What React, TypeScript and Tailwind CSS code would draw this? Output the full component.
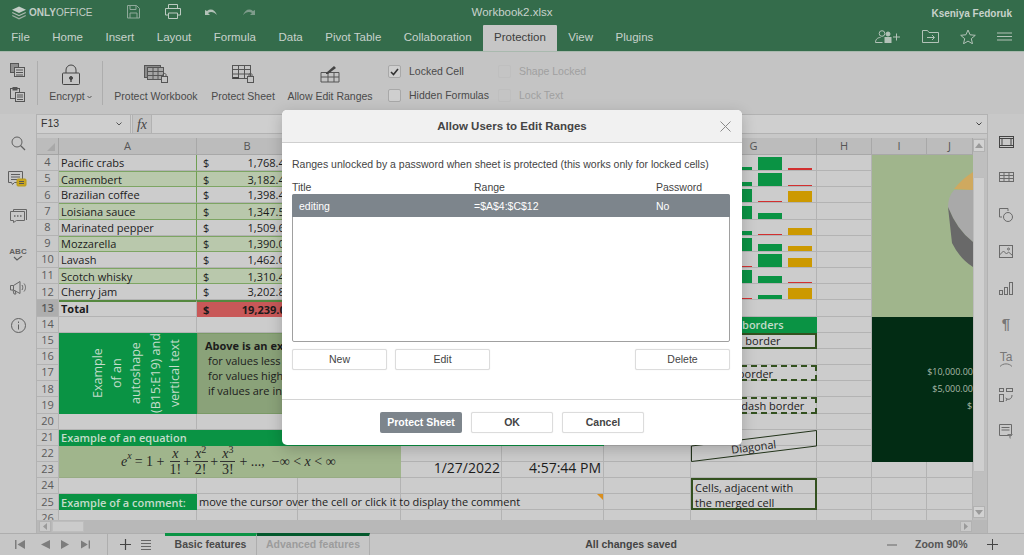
import React from "react";

const UI = "font-['Liberation_Sans',Arial,sans-serif]";
const CELL = "font-['Open_Sans',sans-serif] text-[11px] leading-[15px] text-[#1c1c1c]";

const tabs = ["File", "Home", "Insert", "Layout", "Formula", "Data", "Pivot Table", "Collaboration", "Protection", "View", "Plugins"];
const items: [string, string, boolean][] = [
  ["Pacific crabs", "1,768.41", false],
  ["Camembert", "3,182.40", true],
  ["Brazilian coffee", "1,398.40", false],
  ["Loisiana sauce", "1,347.50", true],
  ["Marinated pepper", "1,509.60", false],
  ["Mozzarella", "1,390.00", true],
  ["Lavash", "1,462.00", false],
  ["Scotch whisky", "1,310.40", true],
  ["Cherry jam", "3,202.80", false],
];
type Bar = [number, "g" | "r" | "a" | "n"];
const bars: Bar[][] = [
  [[3, "g"], [13, "g"], [2, "r"]],
  [[4, "g"], [13, "g"], [1, "r"]],
  [[13, "g"], [1, "r"], [11, "a"]],
  [[13, "g"], [6, "g"], [0, "n"]],
  [[4, "g"], [1, "r"], [7, "a"]],
  [[13, "g"], [7, "g"], [5, "a"]],
  [[1, "r"], [13, "g"], [9, "a"]],
  [[13, "g"], [7, "g"], [1, "r"]],
  [[1, "r"], [4, "g"], [11, "a"]],
];
const barColor = { g: "bg-[#0a9344]", r: "bg-[#d22f2f]", a: "bg-[#cc9900]", n: "bg-transparent" };
const cols = ["A", "B", "C", "D", "E", "F", "G", "H", "I", "J"];
const rowNums = Array.from({ length: 23 }, (_, i) => i + 4);

const Ic = ({ w, h, children, className = "" }: { w: number; h: number; children: React.ReactNode; className?: string }) => (
  <svg width={w} height={h} viewBox={`0 0 ${w} ${h}`} fill="none" stroke="currentColor" strokeWidth="1" className={className}>
    {children}
  </svg>
);

function Fraction({ n, sup, d }: { n: string; sup?: string; d: string }) {
  return (
    <span className="inline-flex flex-col items-center mx-[2px] leading-[15px]">
      <span className="border-b border-[#333] px-[2px] italic h-[16px]">
        {n}
        {sup && <sup className="text-[10px] not-italic leading-none">{sup}</sup>}
      </span>
      <span>{d}</span>
    </span>
  );
}

function Header() {
  return (
    <div className={`bg-[#346c4b] h-[52px] shrink-0 flex flex-col border-b border-[#a9b9ae] ${UI}`}>
      <div className="h-[25px] flex items-center relative text-[#c8d2cb]">
        <div className="flex items-center pl-[11px] w-[120px]">
          <svg width="16" height="14" viewBox="0 0 16 14" className="mr-[2px]">
            <path d="M8 0.5 15 3.8 8 7 1 3.8Z" fill="#c4cec7" />
            <path d="M1.5 6 8 9 14.5 6 15 7 8 10.2 1 7Z" fill="#aebbb2" />
            <path d="M1.5 9 8 12 14.5 9 15 10 8 13.4 1 10Z" fill="#9dada3" />
          </svg>
          <span className="text-[10px] font-bold text-[#c2cdc6]">ONLY<span className="font-normal">OFFICE</span></span>
        </div>
        <div className="flex items-center text-[#8fa99a] absolute left-[127px] top-[4px]">
          <Ic w={13} h={15}><path d="M.5 1.5h9l3 3v9.5h-12zM3 1.5v4h6v-4M3 14v-5h7v5" /></Ic>
          <Ic w={16} h={15} className="text-[#bccac1] ml-[25px]"><path d="M3.5 4V.5h9V4M.5 4.5h15V11h-3M3.5 11h-3V4.5M3.5 9h9v5.5h-9z" /></Ic>
          <Ic w={14} h={10} className="text-[#b3c2b8] ml-[23px]"><path d="M1 3v5h5L4 6c3-2 6-1 9 2-2-5-6-7-10-4z" fill="currentColor" stroke="none" /></Ic>
          <Ic w={14} h={10} className="text-[#7e9c8b] ml-[24px]"><path d="M13 3v5H8l2-2c-3-2-6-1-9 2 2-5 6-7 10-4z" fill="currentColor" stroke="none" /></Ic>
        </div>
        <div className="flex-1 text-center text-[11.5px] text-[#c8d2cb] pr-[120px]">Workbook2.xlsx</div>
        <div className="absolute right-[12px] top-[6px] text-[10px] font-bold text-[#c8d2cb]">Kseniya Fedoruk</div>
      </div>
      <div className="h-[26px] flex items-stretch text-[11.5px] text-[#c8d2cb] relative">
        {tabs.map((t) => (
          <div
            key={t}
            className={`px-[11.25px] flex items-center rounded-t-[1px] ${t === "Protection" ? "bg-[#c6c6c6] text-[#3d3d3d]" : ""}`}
          >
            {t}
          </div>
        ))}
        <div className="ml-auto flex items-center gap-[21px] pr-[12px] text-[#b3c2b8] -mt-[3px]">
          <Ic w={26} h={13}>
            <circle cx="7" cy="3.5" r="2.8" />
            <path d="M.5 12.5c0-4 3-5 5-5M.5 12.5h7" />
            <circle cx="13" cy="4" r="2" fill="currentColor" />
            <rect x="10" y="7.5" width="6" height="5" fill="currentColor" />
            <path d="M18 7h7M21.5 3.5v7" />
          </Ic>
          <Ic w={17} h={13}><path d="M.5 12.5V.5h5l1.5 2h9.5v10zM5 7.5h7M10 5l2.5 2.500L10 10" /></Ic>
          <Ic w={16} h={15}><path d="M8 1l2.100 4.800 5.200.5-4 3.400 1.200 5.100L8 12.100 3.500 14.800l1.200-5.100-4-3.400 5.200-.5z" /></Ic>
          <Ic w={15} h={9}><path d="M0 1h15M0 4.500h15M0 8h15" /></Ic>
        </div>
      </div>
    </div>
  );
}

function Check({ on, off }: { on?: boolean; off?: boolean }) {
  return (
    <span className={`w-[13px] h-[13px] rounded-[2px] border flex items-center justify-center ${off ? "border-[#bfbfbf] bg-[#c4c4c4]" : "border-[#a8a8a8] bg-[#cfcfcf]"}`}>
      {on && (
        <svg width="9" height="8" viewBox="0 0 9 8"><path d="M1 4l2.500 2.500L8 1" stroke="#333" strokeWidth="1.600" fill="none" /></svg>
      )}
    </span>
  );
}

function BigBtn({ w, label, children }: { w: number; label: string; children: React.ReactNode }) {
  return (
    <div className="flex flex-col items-center" style={{ width: w }}>
      <div className="h-[24px] flex items-end justify-center pb-[2px] text-[#555]">{children}</div>
      <div className="mt-[5px] text-[10.5px] leading-[13px] whitespace-nowrap text-[#4a4a4a]">{label}</div>
    </div>
  );
}

function Toolbar() {
  return (
    <div className={`bg-[#c4c4c4] h-[62px] shrink-0 flex items-start pt-[9px] ${UI}`}>
      <div className="w-[37px] flex flex-col items-center gap-[10px] pt-[2px] text-[#555] -ml-[1px]">
        <Ic w={15} h={14}>
          <rect x=".5" y=".5" width="8" height="9" fill="#8e8e8e" />
          <rect x="4.500" y="4.500" width="10" height="9" fill="#c4c4c4" />
          <path d="M6 7h7M6 9.500h7M6 12h7" />
        </Ic>
        <Ic w={15} h={15}>
          <rect x=".5" y="1.500" width="9" height="10" />
          <rect x="3" y="0" width="4" height="3" fill="#555" />
          <rect x="5.500" y="5.500" width="9" height="9" fill="#c4c4c4" />
          <path d="M7 8h6M7 10h6M7 12.500h6" />
        </Ic>
      </div>
      <div className="w-px h-[44px] bg-[#adadad] ml-[1px]" />
      <div className="w-[64px] flex flex-col items-center pl-[1px]">
        <div className="h-[24px] flex items-end text-[#444]">
          <Ic w={18} h={21}>
            <path d="M4 9V6a5 5 0 0 1 10 0v3" />
            <rect x=".5" y="9" width="17" height="11.500" rx="1" />
            <circle cx="9" cy="14" r="1.500" fill="currentColor" />
            <path d="M9 15v3" strokeWidth="1.400" />
          </Ic>
        </div>
        <div className="mt-[5px] text-[10.5px] leading-[13px] text-[#4a4a4a] flex items-center gap-[2px]">
          Encrypt
          <svg width="5" height="4" viewBox="0 0 5 4"><path d="M.5 1l2 2 2-2" stroke="#555" fill="none" /></svg>
        </div>
      </div>
      <div className="w-px h-[44px] bg-[#adadad]" />
      <div className="flex ml-[11px]">
        <BigBtn w={84} label="Protect Workbook">
          <Ic w={24} h={18}>
            <rect x=".5" y=".5" width="16" height="12" fill="#8a8a8a" />
            <rect x="3.500" y="2.500" width="16" height="12" fill="#a5a5a5" />
            <path d="M3.500 6.500h16M3.500 10.500h16M9 2.500v12M14 2.500v12" />
            <rect x="17.500" y="11.500" width="6" height="6" fill="#c4c4c4" />
            <path d="M19 11.500v-2a1.600 1.600 0 0 1 3 0v2" />
          </Ic>
        </BigBtn>
        <div className="w-[13px]" />
        <BigBtn w={64} label="Protect Sheet">
          <Ic w={22} h={18}>
            <rect x=".5" y=".5" width="18" height="13" />
            <path d="M.5 4.500h18M.5 9h18M6.500 .5v13M12.500 .5v13" />
            <rect x="1" y="12" width="6" height="2" fill="#444" stroke="none" />
            <rect x="15.500" y="11.500" width="6" height="6" fill="#c4c4c4" />
            <path d="M17 11.500v-2a1.600 1.600 0 0 1 3 0v2" />
          </Ic>
        </BigBtn>
        <div className="w-[13px]" />
        <BigBtn w={84} label="Allow Edit Ranges">
          <Ic w={20} h={18}>
            <path d="M1 7.500h18v9.500H1zM1 12h18M8 7.500v9.500M14 7.500V17" />
            <path d="M6 8l8-7 2 2-8 6H6z" fill="#444" stroke="none" />
          </Ic>
        </BigBtn>
      </div>
      <div className="ml-[16px] flex flex-col text-[10.5px] leading-[13px] -mt-[1px]">
        <div className="h-[23px] flex items-center gap-[8px] text-[#4a4a4a]"><Check on /> Locked Cell</div>
        <div className="h-[25px] flex items-center gap-[8px] text-[#4a4a4a]"><Check /> Hidden Formulas</div>
      </div>
      <div className="ml-[9px] flex flex-col text-[10.5px] leading-[13px] -mt-[1px]">
        <div className="h-[23px] flex items-center gap-[8px] text-[#a0a0a0]"><Check off /> Shape Locked</div>
        <div className="h-[25px] flex items-center gap-[8px] text-[#a0a0a0]"><Check off /> Lock Text</div>
      </div>
    </div>
  );
}

function LeftRail() {
  return (
    <div className="w-[37px] shrink-0 bg-[#c8c8c8] border-r border-[#b2b2b2] flex flex-col items-center pt-[22px] text-[#666]">
      <div className="h-[36px]">
        <Ic w={15} h={15} className="text-[#606060]"><circle cx="6" cy="6" r="5" /><path d="M9.500 9.500L14 14" strokeWidth="1.300" /></Ic>
      </div>
      <div className="h-[38px] -mt-[1px]">
        <svg width="20" height="16" viewBox="0 0 20 16" fill="none" stroke="#5f5f5f">
          <path d="M.5.5h14v11h-8l-2 2-1-2h-3z" />
          <path d="M3 3.500h9M3 6h9M3 8.500h6" />
          <rect x="9" y="8" width="9" height="7" rx="1" fill="#c9a61e" stroke="#b79a1c" />
          <path d="M11 10.500h5M11 12.500h5" stroke="#555" />
        </svg>
      </div>
      <div className="h-[36px]">
        <Ic w={17} h={14}>
          <path d="M3.500 2V.5h13V11" /><path d="M.5 2.500h14v9h-8l-3 2v-2h-3z" />
          <path d="M4 7h1.500M7 7h1.500M10 7h1.500" strokeWidth="1.300" />
        </Ic>
      </div>
      <div className="h-[36px] pt-[3px] font-['Liberation_Sans'] text-[8px] leading-[8px] font-bold text-[#5f5f5f] text-center">
        ABC
        <svg width="10" height="6" viewBox="0 0 10 6" className="mx-auto"><path d="M1 1l3 3 5-4" stroke="#5f5f5f" fill="none" strokeWidth="1.200" /></svg>
      </div>
      <div className="h-[37px]">
        <Ic w={16} h={14}>
          <path d="M.5 4.500h3L10 .5v12l-6.500-3.500h-3zM3.500 4.500V9M3 9l1 4h2l-1-3.500M12 4c1 1.500 1 3.500 0 5M14 2.500c2 2.500 2 5.500 0 8" />
        </Ic>
      </div>
      <Ic w={15} h={15} className="text-[#606060]"><circle cx="7.500" cy="7.500" r="7" /><path d="M7.500 6.500v5M7.500 3.500v1.500" /></Ic>
    </div>
  );
}

function RightRail() {
  return (
    <div className="w-[37px] shrink-0 bg-[#c8c8c8] border-l border-[#b2b2b2] flex flex-col items-center pt-[22px] text-[#6a6a6a]">
      <div className="h-[36px]"><Ic w={15} h={13} className="text-[#444]"><rect x=".5" y=".5" width="14" height="11" /><path d="M0 2.500h15M0 9.500h15M3 2.500v7M12 2.500v7" /></Ic></div>
      <div className="h-[36px]"><Ic w={15} h={11}><rect x=".5" y=".5" width="14" height="9" /><path d="M.5 3.500h14M.5 6.500h14M5 .5v9M10 .5v9" /></Ic></div>
      <div className="h-[37px]"><Ic w={14} h={14}><path d="M3 9H.5V.5H9V3" /><circle cx="9" cy="9" r="4.500" /></Ic></div>
      <div className="h-[37px]"><Ic w={14} h={13}><rect x=".5" y=".5" width="13" height="12" /><path d="M.5 10l4-4 3 3 2-2 4 3.500" /><circle cx="9.500" cy="4" r="1" /></Ic></div>
      <div className="h-[36px]"><Ic w={14} h={13}><rect x=".5" y="8.500" width="3" height="4" /><rect x="5.500" y="5.500" width="3" height="7" /><rect x="10.500" y=".5" width="3" height="12" /></Ic></div>
      <div className="h-[35px] font-['Liberation_Sans'] text-[15px] leading-[15px] font-bold text-[#777] -mt-[2px]">¶</div>
      <div className="h-[37px] font-['Liberation_Sans'] text-[12px] leading-[12px] text-[#777] text-center">
        Ta
        <svg width="14" height="4" viewBox="0 0 14 4" className="mx-auto"><path d="M1 3.500c3-3.500 9-3.500 12 0" stroke="#777" fill="none" /></svg>
      </div>
      <div className="h-[36px]"><Ic w={14} h={14}><rect x=".5" y=".5" width="4" height="3" /><rect x="7.500" y=".5" width="6" height="3" /><rect x=".5" y="6.500" width="4" height="7" /><path d="M8 11c3 1 5-1 5-4M6.500 10l1.500 1-1 2" /></Ic></div>
      <div className="h-[36px]"><Ic w={14} h={15}><path d="M.5.5h12v11H.5zM2.500 3.500h8M2.500 6h8" /><path d="M8 10h6l-2.500 2.500V15L10.500 14v-1.500z" fill="#777" stroke="none" /></Ic></div>
    </div>
  );
}

function Sheet() {
  return (
    <div className="flex-1 min-h-0 grid grid-cols-[22px_138px_101px_103px_101px_102px_87px_126px_55px_55px_46px] grid-rows-[17px_repeat(23,16.17px)] overflow-hidden bg-[#cccccc]">
      <div className="bg-[#bcbcbc] border-r border-b border-[#a3a3a3] flex items-end justify-end p-[3px] row-start-1 col-start-1">
        <svg width="8" height="8" viewBox="0 0 8 8"><path d="M8 0v8H0z" fill="#a8a8a8" /></svg>
      </div>
      {cols.map((c, i) => (
        <div
          key={c}
          style={{ gridColumn: i + 2, gridRow: 1 }}
          className="bg-[#bcbcbc] border-r border-b border-[#a8a8a8] flex items-center justify-center text-[11px] font-medium text-[#555] font-['Open_Sans',sans-serif]"
        >
          {c}
        </div>
      ))}
      {rowNums.map((r) => (
        <React.Fragment key={r}>
          <div
            style={{ gridColumn: 1, gridRow: r - 2 }}
            className={`border-r border-b border-[#b3b3b3] flex items-center justify-center text-[11px] text-[#5a5a5a] font-['Open_Sans',sans-serif] ${r === 13 ? "bg-[#aeaeae] font-semibold" : "bg-[#c9c9c9]"}`}
          >
            {r}
          </div>
          {cols.map((c, i) => (
            <div key={c} style={{ gridColumn: i + 2, gridRow: r - 2 }} className="border-r border-b border-[#b3b3b3]" />
          ))}
        </React.Fragment>
      ))}
      {items.map(([name, val, band], i) => (
        <React.Fragment key={name}>
          <div
            style={{ gridColumn: 2, gridRow: i + 2 }}
            className={`${CELL} px-[2px] flex items-center border-r border-[#6f9f52] border-b ${band ? "bg-[#b9c8ac] border-b-[#7da563] border-t border-t-[#7da563]" : "border-b-[#b3b3b3]"}`}
          >
            {name}
          </div>
          <div
            style={{ gridColumn: 3, gridRow: i + 2 }}
            className={`${CELL} pl-[6px] pr-[6px] flex items-center justify-between border-r border-b ${band ? "bg-[#b9c8ac] border-[#7da563] border-t" : "border-[#b3b3b3]"}`}
          >
            <span>$</span><span>{val}</span>
          </div>
          <div style={{ gridColumn: 8, gridRow: i + 2 }} className="flex items-end pl-[37px] gap-[6px] border-r border-b border-[#b3b3b3]">
            {bars[i].map(([h, k], j) => (
              <div key={j} style={{ height: h }} className={`w-[24px] ${barColor[k]}`} />
            ))}
          </div>
        </React.Fragment>
      ))}
      <div className={`${CELL} col-start-2 row-start-11 font-bold px-[2px] flex items-center border-t-2 border-t-[#55883f] border-b border-b-[#b3b3b3] border-r border-r-[#b3b3b3]`}>Total</div>
      <div className={`${CELL} col-start-3 row-start-11 font-bold pl-[6px] pr-[6px] flex items-center justify-between bg-[#c85858] border-t-2 border-t-[#55883f]`}><span>$</span><span>19,239.00</span></div>
      <div className={`${CELL} col-start-2 row-start-13 row-span-5 bg-[#0a9344] text-[#c4dccb] flex justify-center items-center pl-[17px]`}>
        <div className="[writing-mode:vertical-rl] rotate-180 text-center text-[12.5px] leading-[19.2px] h-[80px] whitespace-nowrap">
          Example<br />of an<br />autoshape<br />(B15:E19) and<br />vertical text
        </div>
      </div>
      <div className={`${CELL} col-[3/7] row-start-13 row-span-5 bg-[#8aa279] border border-[#7a9a66] pt-[4px] pl-[7px] leading-[15.400px]`}>
        <div className="font-bold">Above is an example</div>
        <div className="pl-[3px]">for values less than</div>
        <div className="pl-[3px]">for values higher</div>
        <div className="pl-[3px]">if values are in range</div>
      </div>
      <div className={`${CELL} col-start-8 row-start-12 bg-[#0a9344] text-[#c4dccb] font-semibold pl-[4px] flex items-center whitespace-nowrap`}>Types of borders</div>
      <div className={`${CELL} col-start-8 row-start-13 border-2 border-[#33511f] pl-[7px] flex items-center whitespace-nowrap`}>Medium border</div>
      <div className={`${CELL} col-start-8 row-start-15 border-2 border-dashed border-[#33511f] pl-[3px] flex items-center whitespace-nowrap`}>Dashed border</div>
      <div className={`${CELL} col-start-8 row-start-17 border-2 border-dashed border-[#33511f] pl-[3px] flex items-center whitespace-nowrap`}>Medium dash border</div>
      <div className="col-start-8 row-start-19 row-span-2 relative">
        <svg width="126" height="32" viewBox="0 0 126 32" fill="none" stroke="#22331a" className="absolute inset-0">
          <path d="M.5 16V31.500L125.500 16V.5L.5 16" />
        </svg>
        <div className={`${CELL} absolute left-[40px] top-[9px] -rotate-[7deg]`}>Diagonal</div>
      </div>
      <div className={`${CELL} col-start-8 row-start-22 row-span-2 border-2 border-[#33511f] pl-[2px] flex flex-col justify-around whitespace-nowrap`}>
        <span>Cells, adjacent with</span>
        <span>the merged cell</span>
      </div>
      <div className={`${CELL} col-[2/7] row-start-19 bg-[#0a9344] text-[#c4dccb] font-semibold pl-[2px] flex items-center`}>Example of an equation</div>
      <div className="col-[2/5] row-start-20 row-span-2 bg-[#a0b58c] border-b border-[#97ab84] flex items-center pl-[62px] font-['Liberation_Serif',serif] text-[14px] text-[#262626] whitespace-nowrap">
        <i>e</i><sup className="text-[10px] italic">x</sup>
        <span className="mx-[3px]">= 1 +</span>
        <Fraction n="x" d="1!" />
        <span>+</span>
        <Fraction n="x" sup="2" d="2!" />
        <span>+</span>
        <Fraction n="x" sup="3" d="3!" />
        <span className="ml-[2px]">+ ...,&nbsp; −∞ &lt; <i>x</i> &lt; ∞</span>
      </div>
      <div className={`${CELL} col-start-5 row-start-20 row-span-2 text-[14px] flex items-end justify-end pr-[1px] pb-[2px] border-r border-b border-[#b3b3b3]`}>1/27/2022</div>
      <div className={`${CELL} col-start-6 row-start-20 row-span-2 text-[14px] flex items-end justify-end pr-[2px] pb-[2px] border-r border-b border-[#b3b3b3]`}>4:57:44 PM</div>
      <div className={`${CELL} col-start-2 row-start-23 bg-[#0a9344] text-[#c4dccb] font-semibold pl-[2px] flex items-center`}>Example of a comment:</div>
      <div className={`${CELL} col-[3/7] row-start-23 pl-[2px] flex items-center border-r border-b border-[#b3b3b3] relative whitespace-nowrap`}>
        move the cursor over the cell or click it to display the comment
        <svg width="6" height="6" viewBox="0 0 6 6" className="absolute right-0 top-0"><path d="M0 0h6v6z" fill="#d98f1f" /></svg>
      </div>
      <div className="col-[10/12] row-start-2 row-span-10 bg-[#a0b58c] overflow-hidden">
        <svg width="101" height="161" viewBox="0 0 101 161">
          <path d="M82 34Q90 24 101 17V35Z" fill="#cfa95f" />
          <path d="M76 52Q76 42 82 35H101V87Q85 75 76 52Z" fill="#a9a9a9" />
          <path d="M76 52Q85 75 101 87V112Q88 104 80 88Z" fill="#696969" />
        </svg>
      </div>
      <div className="font-['Open_Sans',sans-serif] leading-[15px] col-[10/12] row-start-12 row-span-9 bg-[#022c14] text-[#a9b9a9] flex flex-col items-end gap-[2px] pt-[47px] overflow-hidden text-[9px]">
        <span>$10,000.00</span>
        <span>$5,000.00</span>
        <span className="-mr-[4px] w-[10px]">$</span>
      </div>
    </div>
  );
}

function Btn({ w, children, className = "" }: { w: number; children: React.ReactNode; className?: string }) {
  return (
    <div
      style={{ width: w }}
      className={`h-[21px] rounded-[2px] border border-[#dcdcdc] bg-white shadow-[0_0_1px_rgba(0,0,0,0.15)] flex items-center justify-center text-[#444] text-[10.5px] ${className}`}
    >
      {children}
    </div>
  );
}

function Dialog() {
  return (
    <div className={`absolute left-[282px] top-[110px] w-[460px] h-[335px] bg-white rounded-[5px] shadow-[0_4px_15px_rgba(0,0,0,0.2)] flex flex-col ${UI}`}>
      <div className="h-[33px] shrink-0 bg-[#f1f1f1] border-b border-[#cfcfcf] rounded-t-[5px] flex items-center justify-center relative pt-[2px]">
        <span className="text-[11.5px] font-bold text-[#444]">Allow Users to Edit Ranges</span>
        <svg width="11" height="11" viewBox="0 0 11 11" className="absolute right-[11px] top-[11px]"><path d="M.5.5l10 10M10.500.5l-10 10" stroke="#8a8a8a" /></svg>
      </div>
      <div className="px-[10px] pt-[15px] flex-1 flex flex-col">
        <div className="text-[10.5px] leading-[13px] text-[#444] whitespace-nowrap">Ranges unlocked by a password when sheet is protected (this works only for locked cells)</div>
        <div className="flex text-[10.5px] leading-[13px] text-[#444] mt-[10px] h-[13px]">
          <span className="w-[182px]">Title</span>
          <span className="w-[182px]">Range</span>
          <span>Password</span>
        </div>
        <div className="h-[148px] border border-[#a0a0a0] rounded-[2px] w-[438px]">
          <div className="h-[23px] -mx-px -mt-px pt-[2px] bg-[#7d858c] rounded-t-[2px] flex items-center text-[#fff] text-[10.5px] pl-[7px]">
            <span className="w-[175px]">editing</span>
            <span className="w-[182px]">=$A$4:$C$12</span>
            <span>No</span>
          </div>
        </div>
        <div className="flex mt-[7px] w-[438px]">
          <Btn w={95}>New</Btn>
          <Btn w={95} className="ml-[8px]">Edit</Btn>
          <Btn w={95} className="ml-auto">Delete</Btn>
        </div>
      </div>
      <div className="h-[46px] shrink-0 border-t border-[#d4d4d4] flex items-start justify-center gap-[9px] pt-[12px]">
        <div className="w-[82px] h-[21px] bg-[#7d858c] rounded-[2px] text-white text-[10.5px] font-bold flex items-center justify-center">Protect Sheet</div>
        <Btn w={82} className="font-bold">OK</Btn>
        <Btn w={82} className="font-bold">Cancel</Btn>
      </div>
    </div>
  );
}

export default function App() {
  return (
    <div className="w-[1024px] h-[555px] overflow-hidden relative flex flex-col bg-[#c8c8c8]">
      <Header />
      <Toolbar />
      <div className="flex-1 min-h-0 flex">
        <LeftRail />
        <div className="flex-1 min-w-0 flex flex-col">
          <div className={`h-[24px] shrink-0 border-t border-[#b2b2b2] ${UI}`}>
            <div className="h-[19px] flex bg-[#cfcfcf] border-b border-[#b2b2b2]">
              <div className="w-[94px] border-r border-[#b2b2b2] flex items-center pl-[4px] text-[10.5px] text-[#333]">
                F13
                <svg width="6" height="4" viewBox="0 0 6 4" className="ml-auto mr-[8px]"><path d="M.5.5L3 3 5.500.5" stroke="#555" fill="none" /></svg>
              </div>
              <div className="w-[20px] ml-[1px] bg-[#c4c4c4] border-x border-[#b2b2b2] flex items-center justify-center font-['Liberation_Serif',serif] italic text-[14px] text-[#444]">fx</div>
              <div className="flex-1 flex items-center justify-end pr-[5px]">
                <svg width="6" height="4" viewBox="0 0 6 4"><path d="M.5.5L3 3 5.500.5" stroke="#444" fill="none" /></svg>
              </div>
            </div>
          </div>
          <div className="flex-1 min-h-0 flex">
            <Sheet />
            <div className="w-[14px] shrink-0 bg-[#bfbfbf] flex flex-col items-start pt-px">
              <div className="w-[12px] h-[13px] bg-[#d2d2d2] border border-[#b2b2b2] flex items-center justify-center">
                <svg width="8" height="5" viewBox="0 0 8 5"><path d="M4 0l4 5H0z" fill="#9a9a9a" /></svg>
              </div>
              <div className="w-[12px] h-[295px] mt-[25px] bg-[#cfcfcf] border border-[#bdbdbd] rounded-[1px]" />
              <div className="w-[12px] h-[12px] mt-[34px] bg-[#d2d2d2] border border-[#b2b2b2] flex items-center justify-center">
                <svg width="8" height="5" viewBox="0 0 8 5"><path d="M0 0h8L4 5z" fill="#9a9a9a" /></svg>
              </div>
            </div>
          </div>
          <div className="h-[13px] shrink-0 bg-[#b8b8b8] flex items-center pl-[2px]">
            <div className="w-[12px] h-[11px] bg-[#c9c9c9] border border-[#b2b2b2] flex items-center justify-center">
              <svg width="4" height="7" viewBox="0 0 4 7"><path d="M4 0v7L0 3.500z" fill="#9a9a9a" /></svg>
            </div>
            <div className="w-[32px] h-[11px] bg-[#cbcbcb] border border-[#bdbdbd] ml-px" />
            <div className="ml-auto mr-[15px] w-[12px] h-[11px] bg-[#c9c9c9] border border-[#b2b2b2] flex items-center justify-center">
              <svg width="4" height="7" viewBox="0 0 4 7"><path d="M0 0v7l4-3.500z" fill="#9a9a9a" /></svg>
            </div>
          </div>
        </div>
        <RightRail />
      </div>
      <div className={`h-[22px] shrink-0 bg-[#c6c6c6] border-t border-[#aeaeae] flex items-stretch ${UI} text-[#6a6a6a]`}>
        <div className="w-[108px] border-r border-[#aeaeae] flex items-center pl-[15px]">
          <svg width="10" height="9" viewBox="0 0 10 9" fill="#7d7d7d"><rect width="1.500" height="9" /><path d="M10 0v9L2.500 4.500z" /></svg>
          <svg width="9" height="9" viewBox="0 0 9 9" fill="#7d7d7d" className="ml-[16px]"><path d="M9 0v9L0 4.500z" /></svg>
          <svg width="8" height="9" viewBox="0 0 8 9" fill="#7d7d7d" className="ml-[11px]"><path d="M0 0v9l8-4.500z" /></svg>
          <svg width="9" height="9" viewBox="0 0 10 9" fill="#7d7d7d" className="ml-[12px]"><path d="M0 0v9l7.500-4.500z" /><rect x="8.500" width="1.500" height="9" /></svg>
        </div>
        <div className="w-[57px] flex items-center pl-[12px] gap-[10px]">
          <svg width="11" height="11" viewBox="0 0 11 11"><path d="M5.500 0v11M0 5.500h11" stroke="#444" strokeWidth="1.200" /></svg>
          <svg width="10" height="10" viewBox="0 0 10 10"><path d="M0 .5h10M0 3.500h10M0 6.500h10M0 9.500h10" stroke="#666" /></svg>
        </div>
        <div className="w-[92px] -mt-px border-t-[3px] border-t-[#0a9344] border-r border-r-[#aeaeae] flex items-center justify-center text-[10.5px] font-bold text-[#4a4a4a] pb-[1px]">Basic features</div>
        <div className="w-[113px] -mt-px border-t-[3px] border-t-[#02582c] border-r border-r-[#aeaeae] flex items-center justify-center text-[10.5px] font-bold text-[#9c9c9c] pb-[1px]">Advanced features</div>
        <div className="w-[522px] flex items-center justify-center text-[10.5px] font-bold text-[#444]">All changes saved</div>
        <div className="flex-1 flex items-center">
          <svg width="10" height="2" viewBox="0 0 10 2" className="ml-[-5px]"><path d="M0 1h10" stroke="#666" /></svg>
          <span className="ml-[18px] text-[10.5px] font-bold text-[#555]">Zoom 90%</span>
          <svg width="11" height="11" viewBox="0 0 11 11" className="ml-[19px]"><path d="M5.500 0v11M0 5.500h11" stroke="#444" /></svg>
        </div>
      </div>
      <Dialog />
    </div>
  );
}
